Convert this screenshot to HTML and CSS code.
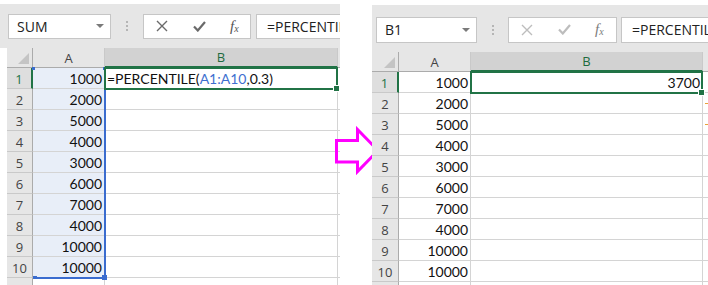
FILE: index.html
```html
<!DOCTYPE html>
<html lang="en">
<head>
    <meta charset="UTF-8">
    <title>PERCENTILE example</title>
    <link rel="stylesheet" href="styles.css">
</head>
<body>
    <div class="sheet sheet-left">
        <div class="toolbar">
            <div class="namebox"><span>SUM</span><i class="drop"></i></div>
            <div class="grip"><b></b><b></b><b></b></div>
            <div class="fxbox">
                <svg class="ico" width="12" height="12" viewBox="0 0 12 12"><path d="M1 1L11 11M11 1L1 11" /></svg>
                <svg class="ico ico-check" width="13" height="11" viewBox="0 0 13 11"><path d="M1 5.5L4.8 9.5L12 1" /></svg>
                <span class="fx"><i>f</i><sub>x</sub></span>
            </div>
            <div class="formula">=PERCENTILE(A1:A10,0.3)</div>
        </div>
        <div class="grid">
            <div class="corner"><i></i></div><div class="colhead">A</div><div class="colhead on">B</div><div class="colhead"></div>
            <div class="rowhead on">1</div><div class="cell num hl">1000</div><div class="cell formula-cell">=PERCENTILE(<span class="ref">A1:A10</span>,0.3)</div><div class="cell"></div>
            <div class="rowhead">2</div><div class="cell num hl">2000</div><div class="cell"></div><div class="cell"></div>
            <div class="rowhead">3</div><div class="cell num hl">5000</div><div class="cell"></div><div class="cell"></div>
            <div class="rowhead">4</div><div class="cell num hl">4000</div><div class="cell"></div><div class="cell"></div>
            <div class="rowhead">5</div><div class="cell num hl">3000</div><div class="cell"></div><div class="cell"></div>
            <div class="rowhead">6</div><div class="cell num hl">6000</div><div class="cell"></div><div class="cell"></div>
            <div class="rowhead">7</div><div class="cell num hl">7000</div><div class="cell"></div><div class="cell"></div>
            <div class="rowhead">8</div><div class="cell num hl">4000</div><div class="cell"></div><div class="cell"></div>
            <div class="rowhead">9</div><div class="cell num hl">10000</div><div class="cell"></div><div class="cell"></div>
            <div class="rowhead">10</div><div class="cell num hl">10000</div><div class="cell"></div><div class="cell"></div>
            <div class="rowhead"></div><div class="cell"></div><div class="cell"></div><div class="cell"></div>

            <div class="refbox">
                <span class="knob k-tl"></span><span class="knob k-tr"></span>
                <span class="knob k-bl"></span><span class="knob k-br"></span>
            </div>
            <div class="active"></div>
        </div>
    </div>

    <svg class="arrow" width="50" height="52" viewBox="0 0 50 52">
        <path d="M3.5 14.5H24.5V3.5L45 24.5L24.5 45.5V36H3.5Z" />
    </svg>

    <div class="sheet sheet-right">
        <div class="toolbar">
            <div class="namebox"><span>B1</span><i class="drop"></i></div>
            <div class="grip"><b></b><b></b><b></b></div>
            <div class="fxbox off">
                <svg class="ico" width="12" height="12" viewBox="0 0 12 12"><path d="M1 1L11 11M11 1L1 11" /></svg>
                <svg class="ico ico-check" width="13" height="11" viewBox="0 0 13 11"><path d="M1 5.5L4.8 9.5L12 1" /></svg>
                <span class="fx"><i>f</i><sub>x</sub></span>
            </div>
            <div class="formula">=PERCENTILE(A1:A10,0.3)</div>
        </div>
        <div class="grid">
            <div class="corner"><i></i></div><div class="colhead">A</div><div class="colhead on">B</div><div class="colhead"></div>
            <div class="rowhead on">1</div><div class="cell num">1000</div><div class="cell num">3700</div><div class="cell"></div>
            <div class="rowhead">2</div><div class="cell num">2000</div><div class="cell"></div><div class="cell"><i class="tick"></i></div>
            <div class="rowhead">3</div><div class="cell num">5000</div><div class="cell"></div><div class="cell"><i class="tick"></i></div>
            <div class="rowhead">4</div><div class="cell num">4000</div><div class="cell"></div><div class="cell"></div>
            <div class="rowhead">5</div><div class="cell num">3000</div><div class="cell"></div><div class="cell"></div>
            <div class="rowhead">6</div><div class="cell num">6000</div><div class="cell"></div><div class="cell"></div>
            <div class="rowhead">7</div><div class="cell num">7000</div><div class="cell"></div><div class="cell"></div>
            <div class="rowhead">8</div><div class="cell num">4000</div><div class="cell"></div><div class="cell"></div>
            <div class="rowhead">9</div><div class="cell num">10000</div><div class="cell"></div><div class="cell"></div>
            <div class="rowhead">10</div><div class="cell num">10000</div><div class="cell"></div><div class="cell"></div>
            <div class="rowhead"></div><div class="cell"></div><div class="cell"></div><div class="cell"></div>

            <div class="active"></div>
        </div>
    </div>
</body>
</html>
```

FILE: styles.css
```css
body {
    margin: 0;
    width: 708px;
    height: 285px;
    overflow: hidden;
    position: relative;
    display: flex;
    align-items: flex-start;
    background: #fff;
    font-family: "Open Sans", "Noto Sans", sans-serif;
    color: #222;
}
.sheet {
    overflow: hidden;
    height: 285px;
}
.sheet-left {
    width: 340px;
    padding-top: 4px;
}
.sheet-right {
    width: 336px;
    margin-left: 32px;
    padding-top: 5px;
}

/* name box + formula bar */
.toolbar {
    display: flex;
    align-items: center;
    background: #e6e6e6;
    height: 44px;
    padding-left: 8px;
    overflow: hidden;
}
.sheet-right .toolbar {
    height: 47px;
    padding-left: 4px;
    padding-top: 2px;
    box-sizing: border-box;
}
.namebox, .fxbox, .formula {
    box-sizing: border-box;
    height: 25px;
    background: #fff;
    border: 1px solid #c6c6c6;
    flex-shrink: 0;
}
.sheet-right .namebox, .sheet-right .fxbox, .sheet-right .formula {
    height: 26px;
}
.namebox {
    width: 103px;
    display: flex;
    align-items: center;
    justify-content: space-between;
    padding: 0 6px 0 8px;
    font-size: 14px;
}
.sheet-right .namebox { width: 101px; }
.drop {
    width: 0;
    height: 0;
    border-left: 4px solid transparent;
    border-right: 4px solid transparent;
    border-top: 4px solid #7a7a7a;
}
.grip {
    width: 32px;
    flex-shrink: 0;
    display: flex;
    flex-direction: column;
    align-items: center;
    gap: 2px;
}
.sheet-right .grip { width: 31px; }
.grip b {
    width: 2px;
    height: 2px;
    background: #b5b5b5;
}
.fxbox {
    width: 108px;
    display: flex;
    align-items: center;
    padding-left: 12px;
    gap: 25px;
}
.sheet-right .fxbox { width: 109px; }
.ico {
    fill: none;
    stroke: #6a6a6a;
    stroke-width: 1.4;
    flex-shrink: 0;
}
.ico-check {
    stroke-width: 2.2;
}
.fx {
    font-family: "Liberation Serif", serif;
    font-size: 15px;
    color: #555;
    line-height: 1;
    margin-left: -1px;
}
.fx sub {
    font-size: 10px;
    font-style: italic;
    vertical-align: -1px;
}
.fxbox.off .ico { stroke: #bdbdbd; }
.fxbox.off .fx { color: #7c7c7c; }
.formula {
    width: 200px;
    margin-left: 5px;
    padding-left: 10px;
    font-size: 14px;
    line-height: 23px;
    white-space: nowrap;
}
.sheet-right .formula { margin-left: 4px; }

/* worksheet grid */
.grid {
    position: relative;
    display: grid;
    grid-template-columns: 26px 72px 233px 40px;
    grid-template-rows: 20px repeat(11, 21px);
    margin-left: 7px;
}
.sheet-right .grid {
    grid-template-columns: 27px 72px 232px 40px;
    margin-left: 0;
}
.grid > div {
    box-sizing: border-box;
}
.corner, .colhead, .rowhead {
    background: #e6e6e6;
    border-right: 1px solid #c9c9c9;
    border-bottom: 1px solid #c9c9c9;
    font-size: 13px;
    color: #444;
    text-align: center;
}
.corner {
    position: relative;
    border-bottom-color: #ababab;
    border-right-color: #ababab;
}
.corner i {
    position: absolute;
    right: 3px;
    bottom: 3px;
    width: 0;
    height: 0;
    border-left: 11px solid transparent;
    border-bottom: 11px solid #c4c4c4;
}
.colhead {
    line-height: 20px;
    border-bottom-color: #ababab;
}
.colhead.on {
    background: #d2d2d2;
    color: #1e6b3f;
    border-bottom: 2px solid #217346;
    line-height: 19px;
}
.rowhead {
    line-height: 20px;
    padding-top: 1px;
    border-right-color: #ababab;
}
.rowhead.on {
    background: #dedede;
    color: #217346;
    border-right: 2px solid #217346;
}
.cell {
    border-right: 1px solid #d4d4d4;
    border-bottom: 1px solid #d4d4d4;
    font-family: Lato, "Liberation Sans", sans-serif;
    font-size: 14px;
    line-height: 20px;
    padding-top: 1px;
    color: #111;
    white-space: nowrap;
}
.num {
    text-align: right;
    padding-right: 2px;
}
.hl {
    background: #e8eef8;
}
.formula-cell {
    padding-left: 2px;
}
.ref {
    color: #3f6fd0;
}
.tick {
    display: block;
    width: 3px;
    height: 1px;
    margin: 9px 0 0 2px;
    background: #e8a23a;
}

/* selection overlays */
.active {
    position: absolute;
    grid-row: 2 / 3;
    grid-column: 3 / 4;
    top: -1px;
    left: -1px;
    right: 0;
    bottom: -1px;
    border: 2px solid #217346;
}
.active::after {
    content: "";
    position: absolute;
    right: -4px;
    bottom: -4px;
    width: 5px;
    height: 5px;
    background: #217346;
    border: 1px solid #fff;
}
.refbox {
    position: absolute;
    grid-row: 2 / 12;
    grid-column: 2 / 3;
    top: 0;
    left: 0;
    right: -1px;
    bottom: -1px;
    border-right: 2px solid #3a6ccf;
    border-bottom: 2px solid #3a6ccf;
}
.knob {
    position: absolute;
    width: 4px;
    height: 4px;
    background: #3a6ccf;
}
.k-tl { left: -1px; top: -1px; width: 3px; height: 3px; }
.k-tr { right: -2px; top: -1px; width: 3px; height: 3px; }
.k-bl { left: 0; bottom: -2px; width: 4px; height: 3px; }
.k-br { right: -3px; bottom: -3px; width: 5px; height: 5px; }

.arrow {
    position: absolute;
    left: 333px;
    top: 126px;
    fill: none;
    stroke: #ff00ff;
    stroke-width: 3;
}
```
